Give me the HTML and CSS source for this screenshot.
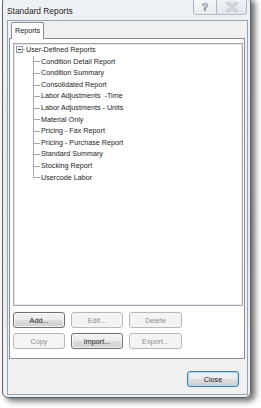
FILE: index.html
```html
<!DOCTYPE html>
<html lang="en">
<head>
    <meta charset="UTF-8">
    <title>Standard Reports</title>
    <link rel="stylesheet" href="styles.css">
</head>
<body>

<div class="window">
    <!-- Caption -->
    <div class="titlebar">
        <span class="title">Standard Reports</span>
        <div class="caption-buttons">
            <span class="cap cap-help">?</span>
            <span class="cap cap-close">
                <svg width="12" height="10" viewBox="0 0 12 10">
                    <path d="M2 1 L10 9 M10 1 L2 9" stroke="#a3a9b0" stroke-width="3" stroke-linecap="round"/>
                    <path d="M2 1 L10 9 M10 1 L2 9" stroke="#f4f6f8" stroke-width="1.4" stroke-linecap="round"/>
                </svg>
            </span>
        </div>
    </div>

    <div class="client">
        <div class="tabs">
            <div class="tab">Reports</div>
        </div>

        <div class="tab-page">
            <div class="tree">
                <div class="root">
                    <span class="toggle"></span>
                    <span class="root-stub"></span>
                    <span>User-Defined Reports</span>
                </div>
                <ul class="children">
                    <li>Condition Detail Report</li>
                    <li>Condition Summary</li>
                    <li>Consolidated Report</li>
                    <li>Labor Adjustments&nbsp; -Time</li>
                    <li>Labor Adjustments - Units</li>
                    <li>Material Only</li>
                    <li>Pricing - Fax Report</li>
                    <li>Pricing - Purchase Report</li>
                    <li>Standard Summary</li>
                    <li>Stocking Report</li>
                    <li>Usercode Labor</li>
                </ul>
            </div>

            <div class="actions">
                <button class="btn">Add...</button>
                <button class="btn" disabled>Edit...</button>
                <button class="btn" disabled>Delete</button>
                <button class="btn" disabled>Copy</button>
                <button class="btn">Import...</button>
                <button class="btn" disabled>Export...</button>
            </div>
        </div>

        <div class="footer">
            <button class="btn btn-default">Close</button>
        </div>
    </div>
</div>

</body>
</html>
```

FILE: styles.css
```css
* {
    box-sizing: border-box;
}
body {
    margin: 0;
    padding: 0;
    width: 261px;
    height: 408px;
    overflow: hidden;
    background-color: #ffffff;
    font-family: 'Liberation Sans', Arial, sans-serif;
    font-size: 7.2px;
    color: #1c1c1c;
}
.window {
    width: 249px;
    height: 402px;
    margin: -4px 0 0 2px;
    border: 1px solid #59616a;
    border-radius: 6px;
    background: linear-gradient(#edf1f5, #e6ebf0 60%, #eef1f4);
    box-shadow: 4px 3px 6px rgba(0, 0, 0, 0.6);
    padding: 0 2px 2px 4px;
    display: flex;
    flex-direction: column;
}
.titlebar {
    height: 23px;
    display: flex;
    align-items: flex-start;
}
.title {
    margin-top: 9px;
    line-height: 11px;
    font-size: 8.4px;
    color: #1b1b1b;
    text-shadow: 0 0 4px #ffffff, 0 0 6px #ffffff;
}
.caption-buttons {
    margin-left: auto;
    margin-right: 1px;
    display: flex;
}
.cap {
    height: 18px;
    display: flex;
    align-items: center;
    justify-content: center;
    padding-top: 3px;
    border: 1px solid #b0b7bf;
    border-top: none;
    background: linear-gradient(#f7f9fb, #e9edf1);
}
.cap-help {
    width: 23px;
    border-radius: 0 0 0 4px;
    border-right: none;
    font-size: 10px;
    font-weight: bold;
    color: #ffffff;
    -webkit-text-stroke: 0.7px #7d838a;
}
.cap-close {
    width: 31px;
    border-radius: 0 0 4px 0;
    background: linear-gradient(#f3f6f9, #dfe6ee);
}
.client {
    flex: 1;
    border: 1px solid #97a3af;
    background-color: #f0f0f0;
    padding: 1px 1px 0 1px;
    display: flex;
    flex-direction: column;
}
.tabs {
    height: 16px;
    padding-left: 2px;
    display: flex;
}
.tab {
    padding: 0 3px;
    border: 1px solid #898c95;
    border-bottom: none;
    border-radius: 2px 2px 0 0;
    background-color: #ffffff;
    line-height: 15px;
    margin-bottom: -1px;
    position: relative;
}
.tab-page {
    height: 321px;
    margin-right: 1px;
    background-color: #ffffff;
    border: 1px solid #898c95;
    padding: 4px 2px 8px 3px;
}
.tree {
    width: 230px;
    height: 263px;
    border: 1px solid #a3a7ad;
    box-shadow: inset 0 0 0 1px #e3e6ea;
    padding: 0 0 0 1px;
}
.root {
    height: 11.6px;
    display: flex;
    align-items: center;
}
.toggle {
    width: 7px;
    height: 7px;
    margin-left: 1px;
    border: 1px solid #8e9aa6;
    background: linear-gradient(#ffffff, #e4e8ec);
    display: flex;
    align-items: center;
    justify-content: center;
}
.toggle::before {
    content: '';
    width: 3px;
    height: 1px;
    background-color: #2b2b2b;
}
.root-stub {
    width: 2px;
    border-top: 1px solid #a8a8a8;
    margin-right: 1px;
}
.children {
    list-style: none;
    margin: 0 0 0 18px;
    padding: 0;
}
.children li {
    position: relative;
    height: 11.6px;
    line-height: 11.6px;
    padding-left: 8px;
    white-space: nowrap;
}
.children li::before {
    content: '';
    position: absolute;
    left: 0;
    top: 0;
    bottom: 0;
    border-left: 1px solid #a8a8a8;
}
.children li:last-child::before {
    bottom: 50%;
}
.children li::after {
    content: '';
    position: absolute;
    left: 0;
    top: 50%;
    width: 7px;
    border-top: 1px solid #a8a8a8;
}
.actions {
    margin-top: 6px;
    display: grid;
    grid-template-columns: 52px 52px 53px;
    grid-auto-rows: 16px;
    column-gap: 6px;
    row-gap: 5px;
}
.btn {
    font-family: inherit;
    font-size: 7.2px;
    color: #1c1c1c;
    padding: 0;
    border: 1px solid #707070;
    border-radius: 3px;
    background: linear-gradient(#f2f2f2, #ebebeb 48%, #dddddd 52%, #cfcfcf);
    box-shadow: inset 0 0 0 1px rgba(255, 255, 255, 0.7);
}
.btn:disabled {
    color: #8d8d8d;
    border-color: #b7babd;
    background: #f4f4f4;
    box-shadow: none;
}
.footer {
    flex: 1;
    display: flex;
    justify-content: flex-end;
    align-items: flex-start;
    padding: 12px 7px 0 0;
}
.btn-default {
    width: 52px;
    height: 16px;
    border-color: #3c7fb1;
    box-shadow: inset 0 0 0 1px #a6dcf8;
    background: linear-gradient(#f2f2f2, #ebebeb 48%, #dddddd 52%, #cfcfcf);
}
```
